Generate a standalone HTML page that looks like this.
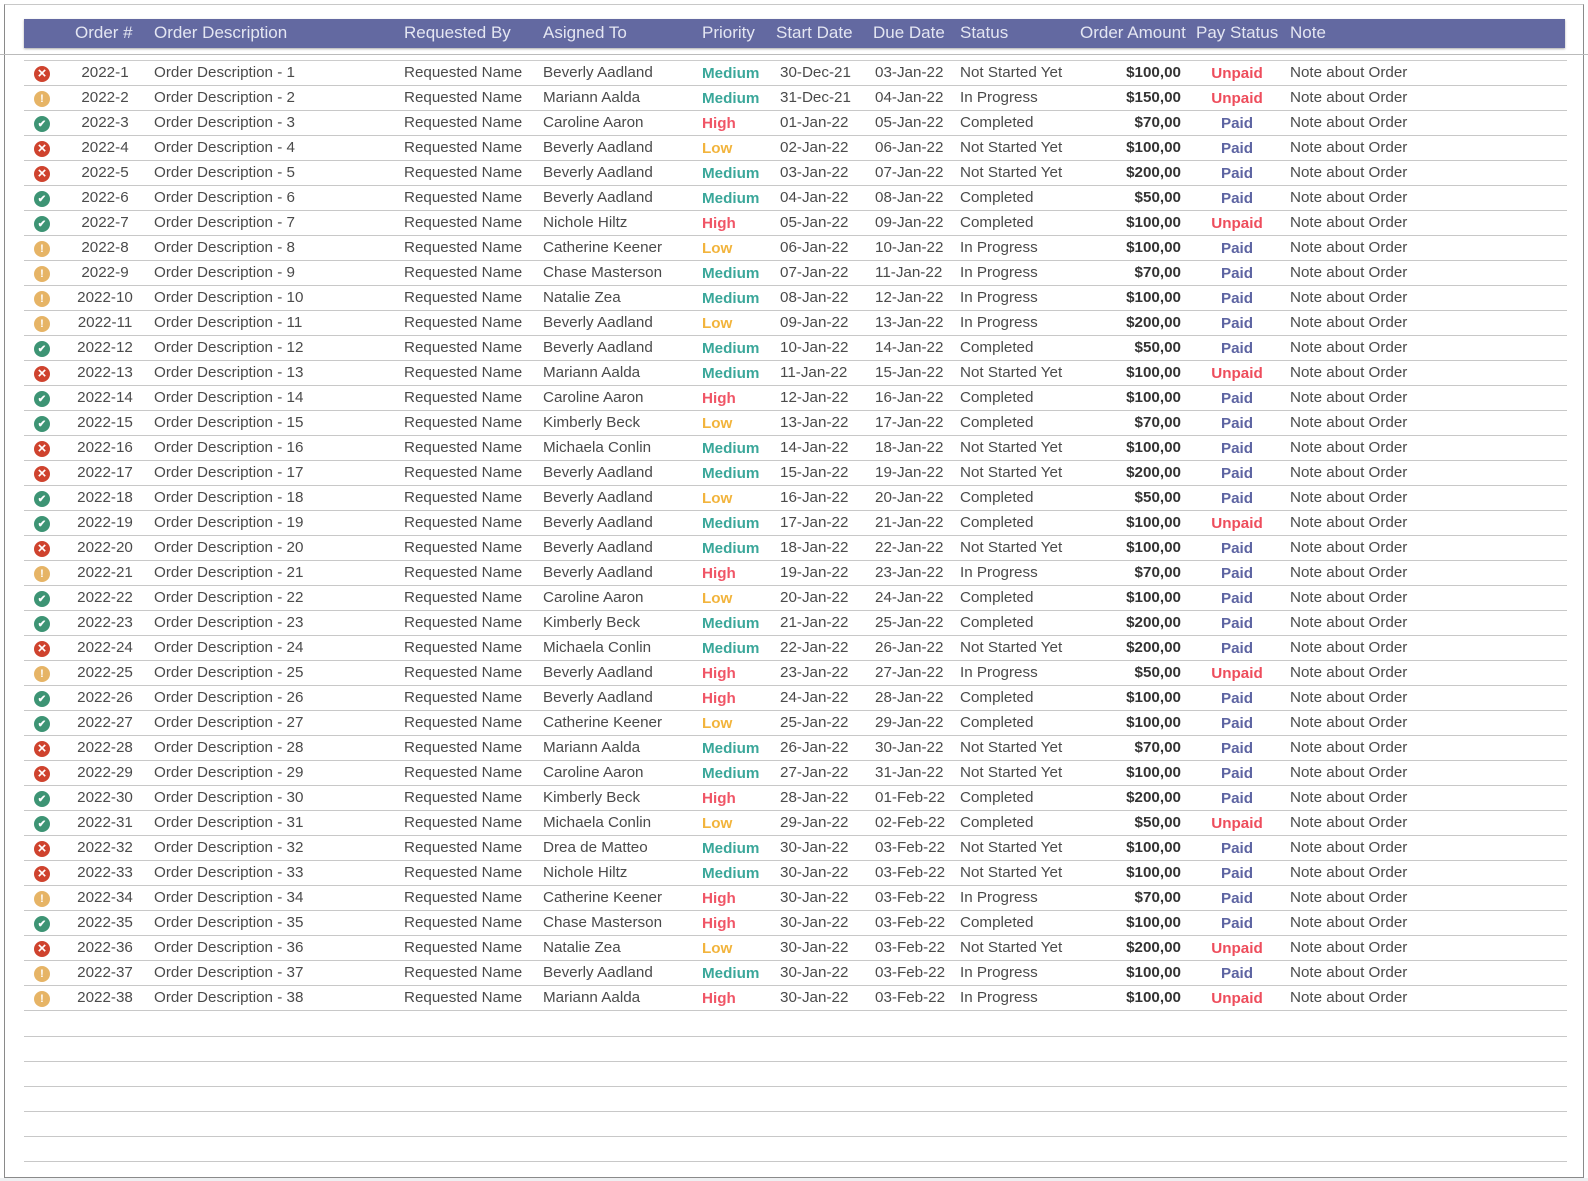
<!DOCTYPE html>
<html><head><meta charset="utf-8"><style>
*{margin:0;padding:0;box-sizing:border-box}
body{width:1588px;height:1181px;background:#fff;font-family:"Liberation Sans",sans-serif;color:#4a4a4a;position:relative;overflow:hidden}
.frame{position:absolute;left:4px;top:4px;width:1580px;height:1174px;border:1px solid #8a8a8a;border-top-color:#c8c8c8}
.bottom{position:absolute;left:0;top:1178px;width:1588px;height:3px;background:#eef0f2}
.hdr{position:absolute;left:24px;top:19px;width:1541px;height:29px;background:#6369a1;box-shadow:0 1px 2px #aaa}
.hdr span{position:absolute;top:4px;font-size:17px;color:#e4e6f2;white-space:nowrap}
.sep{position:absolute;left:0;top:54px;width:1588px;height:1px;background:#bbb}
.top2{position:absolute;left:24px;top:60px;width:1543px;height:1px;background:#ccc}
.rows{position:absolute;left:24px;top:61px;width:1543px}
.r{position:relative;height:25px;border-bottom:1px solid #c8c8c8;font-size:15.2px;line-height:23px}
.r span{position:absolute;top:0;white-space:nowrap}
.i{position:absolute;left:10px;top:5px;width:16px;height:16px;border-radius:50%;color:#fff;font-size:11px;line-height:16px;text-align:center;font-weight:bold;font-style:normal}
.x{background:#cf432e}.x:after{content:"×";font-size:15px}
.w{background:#e6b466}.w:after{content:"!"}
.c{background:#3d9474}.c:after{content:"✔";font-size:10px}
.n{left:46px;width:70px;text-align:center}
.d{left:130px}.q{left:380px}.a{left:519px}
.p{left:678px;font-weight:bold;top:1px!important}
.M{color:#3aa79a}.H{color:#f05566}.L{color:#f2b43c}
.s{left:756px}.e{left:851px}.t{left:936px}
.m{left:1057px;width:100px;text-align:right;font-weight:bold;color:#333}
.y{left:1175px;width:76px;text-align:center;font-weight:bold;top:1px!important}
.P{color:#5d64a2}.U{color:#ee4d5c}
.o{left:1266px}
.ln{position:absolute;left:24px;width:1543px;height:1px;background:#c8c8c8}
</style></head><body>
<div class="frame"></div><div class="bottom"></div>
<div class="hdr">
<span style="left:51px">Order #</span><span style="left:130px">Order Description</span><span style="left:380px">Requested By</span><span style="left:519px">Asigned To</span><span style="left:678px">Priority</span><span style="left:752px">Start Date</span><span style="left:849px">Due Date</span><span style="left:936px">Status</span><span style="left:1056px">Order Amount</span><span style="left:1172px">Pay Status</span><span style="left:1266px">Note</span>
</div>
<div class="sep"></div><div class="top2"></div>
<div class="rows">
<div class="r"><i class="i x"></i><span class="n">2022-1</span><span class="d">Order Description - 1</span><span class="q">Requested Name</span><span class="a">Beverly Aadland</span><span class="p M">Medium</span><span class="s">30-Dec-21</span><span class="e">03-Jan-22</span><span class="t">Not Started Yet</span><span class="m">$100,00</span><span class="y U">Unpaid</span><span class="o">Note about Order</span></div>
<div class="r"><i class="i w"></i><span class="n">2022-2</span><span class="d">Order Description - 2</span><span class="q">Requested Name</span><span class="a">Mariann Aalda</span><span class="p M">Medium</span><span class="s">31-Dec-21</span><span class="e">04-Jan-22</span><span class="t">In Progress</span><span class="m">$150,00</span><span class="y U">Unpaid</span><span class="o">Note about Order</span></div>
<div class="r"><i class="i c"></i><span class="n">2022-3</span><span class="d">Order Description - 3</span><span class="q">Requested Name</span><span class="a">Caroline Aaron</span><span class="p H">High</span><span class="s">01-Jan-22</span><span class="e">05-Jan-22</span><span class="t">Completed</span><span class="m">$70,00</span><span class="y P">Paid</span><span class="o">Note about Order</span></div>
<div class="r"><i class="i x"></i><span class="n">2022-4</span><span class="d">Order Description - 4</span><span class="q">Requested Name</span><span class="a">Beverly Aadland</span><span class="p L">Low</span><span class="s">02-Jan-22</span><span class="e">06-Jan-22</span><span class="t">Not Started Yet</span><span class="m">$100,00</span><span class="y P">Paid</span><span class="o">Note about Order</span></div>
<div class="r"><i class="i x"></i><span class="n">2022-5</span><span class="d">Order Description - 5</span><span class="q">Requested Name</span><span class="a">Beverly Aadland</span><span class="p M">Medium</span><span class="s">03-Jan-22</span><span class="e">07-Jan-22</span><span class="t">Not Started Yet</span><span class="m">$200,00</span><span class="y P">Paid</span><span class="o">Note about Order</span></div>
<div class="r"><i class="i c"></i><span class="n">2022-6</span><span class="d">Order Description - 6</span><span class="q">Requested Name</span><span class="a">Beverly Aadland</span><span class="p M">Medium</span><span class="s">04-Jan-22</span><span class="e">08-Jan-22</span><span class="t">Completed</span><span class="m">$50,00</span><span class="y P">Paid</span><span class="o">Note about Order</span></div>
<div class="r"><i class="i c"></i><span class="n">2022-7</span><span class="d">Order Description - 7</span><span class="q">Requested Name</span><span class="a">Nichole Hiltz</span><span class="p H">High</span><span class="s">05-Jan-22</span><span class="e">09-Jan-22</span><span class="t">Completed</span><span class="m">$100,00</span><span class="y U">Unpaid</span><span class="o">Note about Order</span></div>
<div class="r"><i class="i w"></i><span class="n">2022-8</span><span class="d">Order Description - 8</span><span class="q">Requested Name</span><span class="a">Catherine Keener</span><span class="p L">Low</span><span class="s">06-Jan-22</span><span class="e">10-Jan-22</span><span class="t">In Progress</span><span class="m">$100,00</span><span class="y P">Paid</span><span class="o">Note about Order</span></div>
<div class="r"><i class="i w"></i><span class="n">2022-9</span><span class="d">Order Description - 9</span><span class="q">Requested Name</span><span class="a">Chase Masterson</span><span class="p M">Medium</span><span class="s">07-Jan-22</span><span class="e">11-Jan-22</span><span class="t">In Progress</span><span class="m">$70,00</span><span class="y P">Paid</span><span class="o">Note about Order</span></div>
<div class="r"><i class="i w"></i><span class="n">2022-10</span><span class="d">Order Description - 10</span><span class="q">Requested Name</span><span class="a">Natalie Zea</span><span class="p M">Medium</span><span class="s">08-Jan-22</span><span class="e">12-Jan-22</span><span class="t">In Progress</span><span class="m">$100,00</span><span class="y P">Paid</span><span class="o">Note about Order</span></div>
<div class="r"><i class="i w"></i><span class="n">2022-11</span><span class="d">Order Description - 11</span><span class="q">Requested Name</span><span class="a">Beverly Aadland</span><span class="p L">Low</span><span class="s">09-Jan-22</span><span class="e">13-Jan-22</span><span class="t">In Progress</span><span class="m">$200,00</span><span class="y P">Paid</span><span class="o">Note about Order</span></div>
<div class="r"><i class="i c"></i><span class="n">2022-12</span><span class="d">Order Description - 12</span><span class="q">Requested Name</span><span class="a">Beverly Aadland</span><span class="p M">Medium</span><span class="s">10-Jan-22</span><span class="e">14-Jan-22</span><span class="t">Completed</span><span class="m">$50,00</span><span class="y P">Paid</span><span class="o">Note about Order</span></div>
<div class="r"><i class="i x"></i><span class="n">2022-13</span><span class="d">Order Description - 13</span><span class="q">Requested Name</span><span class="a">Mariann Aalda</span><span class="p M">Medium</span><span class="s">11-Jan-22</span><span class="e">15-Jan-22</span><span class="t">Not Started Yet</span><span class="m">$100,00</span><span class="y U">Unpaid</span><span class="o">Note about Order</span></div>
<div class="r"><i class="i c"></i><span class="n">2022-14</span><span class="d">Order Description - 14</span><span class="q">Requested Name</span><span class="a">Caroline Aaron</span><span class="p H">High</span><span class="s">12-Jan-22</span><span class="e">16-Jan-22</span><span class="t">Completed</span><span class="m">$100,00</span><span class="y P">Paid</span><span class="o">Note about Order</span></div>
<div class="r"><i class="i c"></i><span class="n">2022-15</span><span class="d">Order Description - 15</span><span class="q">Requested Name</span><span class="a">Kimberly Beck</span><span class="p L">Low</span><span class="s">13-Jan-22</span><span class="e">17-Jan-22</span><span class="t">Completed</span><span class="m">$70,00</span><span class="y P">Paid</span><span class="o">Note about Order</span></div>
<div class="r"><i class="i x"></i><span class="n">2022-16</span><span class="d">Order Description - 16</span><span class="q">Requested Name</span><span class="a">Michaela Conlin</span><span class="p M">Medium</span><span class="s">14-Jan-22</span><span class="e">18-Jan-22</span><span class="t">Not Started Yet</span><span class="m">$100,00</span><span class="y P">Paid</span><span class="o">Note about Order</span></div>
<div class="r"><i class="i x"></i><span class="n">2022-17</span><span class="d">Order Description - 17</span><span class="q">Requested Name</span><span class="a">Beverly Aadland</span><span class="p M">Medium</span><span class="s">15-Jan-22</span><span class="e">19-Jan-22</span><span class="t">Not Started Yet</span><span class="m">$200,00</span><span class="y P">Paid</span><span class="o">Note about Order</span></div>
<div class="r"><i class="i c"></i><span class="n">2022-18</span><span class="d">Order Description - 18</span><span class="q">Requested Name</span><span class="a">Beverly Aadland</span><span class="p L">Low</span><span class="s">16-Jan-22</span><span class="e">20-Jan-22</span><span class="t">Completed</span><span class="m">$50,00</span><span class="y P">Paid</span><span class="o">Note about Order</span></div>
<div class="r"><i class="i c"></i><span class="n">2022-19</span><span class="d">Order Description - 19</span><span class="q">Requested Name</span><span class="a">Beverly Aadland</span><span class="p M">Medium</span><span class="s">17-Jan-22</span><span class="e">21-Jan-22</span><span class="t">Completed</span><span class="m">$100,00</span><span class="y U">Unpaid</span><span class="o">Note about Order</span></div>
<div class="r"><i class="i x"></i><span class="n">2022-20</span><span class="d">Order Description - 20</span><span class="q">Requested Name</span><span class="a">Beverly Aadland</span><span class="p M">Medium</span><span class="s">18-Jan-22</span><span class="e">22-Jan-22</span><span class="t">Not Started Yet</span><span class="m">$100,00</span><span class="y P">Paid</span><span class="o">Note about Order</span></div>
<div class="r"><i class="i w"></i><span class="n">2022-21</span><span class="d">Order Description - 21</span><span class="q">Requested Name</span><span class="a">Beverly Aadland</span><span class="p H">High</span><span class="s">19-Jan-22</span><span class="e">23-Jan-22</span><span class="t">In Progress</span><span class="m">$70,00</span><span class="y P">Paid</span><span class="o">Note about Order</span></div>
<div class="r"><i class="i c"></i><span class="n">2022-22</span><span class="d">Order Description - 22</span><span class="q">Requested Name</span><span class="a">Caroline Aaron</span><span class="p L">Low</span><span class="s">20-Jan-22</span><span class="e">24-Jan-22</span><span class="t">Completed</span><span class="m">$100,00</span><span class="y P">Paid</span><span class="o">Note about Order</span></div>
<div class="r"><i class="i c"></i><span class="n">2022-23</span><span class="d">Order Description - 23</span><span class="q">Requested Name</span><span class="a">Kimberly Beck</span><span class="p M">Medium</span><span class="s">21-Jan-22</span><span class="e">25-Jan-22</span><span class="t">Completed</span><span class="m">$200,00</span><span class="y P">Paid</span><span class="o">Note about Order</span></div>
<div class="r"><i class="i x"></i><span class="n">2022-24</span><span class="d">Order Description - 24</span><span class="q">Requested Name</span><span class="a">Michaela Conlin</span><span class="p M">Medium</span><span class="s">22-Jan-22</span><span class="e">26-Jan-22</span><span class="t">Not Started Yet</span><span class="m">$200,00</span><span class="y P">Paid</span><span class="o">Note about Order</span></div>
<div class="r"><i class="i w"></i><span class="n">2022-25</span><span class="d">Order Description - 25</span><span class="q">Requested Name</span><span class="a">Beverly Aadland</span><span class="p H">High</span><span class="s">23-Jan-22</span><span class="e">27-Jan-22</span><span class="t">In Progress</span><span class="m">$50,00</span><span class="y U">Unpaid</span><span class="o">Note about Order</span></div>
<div class="r"><i class="i c"></i><span class="n">2022-26</span><span class="d">Order Description - 26</span><span class="q">Requested Name</span><span class="a">Beverly Aadland</span><span class="p H">High</span><span class="s">24-Jan-22</span><span class="e">28-Jan-22</span><span class="t">Completed</span><span class="m">$100,00</span><span class="y P">Paid</span><span class="o">Note about Order</span></div>
<div class="r"><i class="i c"></i><span class="n">2022-27</span><span class="d">Order Description - 27</span><span class="q">Requested Name</span><span class="a">Catherine Keener</span><span class="p L">Low</span><span class="s">25-Jan-22</span><span class="e">29-Jan-22</span><span class="t">Completed</span><span class="m">$100,00</span><span class="y P">Paid</span><span class="o">Note about Order</span></div>
<div class="r"><i class="i x"></i><span class="n">2022-28</span><span class="d">Order Description - 28</span><span class="q">Requested Name</span><span class="a">Mariann Aalda</span><span class="p M">Medium</span><span class="s">26-Jan-22</span><span class="e">30-Jan-22</span><span class="t">Not Started Yet</span><span class="m">$70,00</span><span class="y P">Paid</span><span class="o">Note about Order</span></div>
<div class="r"><i class="i x"></i><span class="n">2022-29</span><span class="d">Order Description - 29</span><span class="q">Requested Name</span><span class="a">Caroline Aaron</span><span class="p M">Medium</span><span class="s">27-Jan-22</span><span class="e">31-Jan-22</span><span class="t">Not Started Yet</span><span class="m">$100,00</span><span class="y P">Paid</span><span class="o">Note about Order</span></div>
<div class="r"><i class="i c"></i><span class="n">2022-30</span><span class="d">Order Description - 30</span><span class="q">Requested Name</span><span class="a">Kimberly Beck</span><span class="p H">High</span><span class="s">28-Jan-22</span><span class="e">01-Feb-22</span><span class="t">Completed</span><span class="m">$200,00</span><span class="y P">Paid</span><span class="o">Note about Order</span></div>
<div class="r"><i class="i c"></i><span class="n">2022-31</span><span class="d">Order Description - 31</span><span class="q">Requested Name</span><span class="a">Michaela Conlin</span><span class="p L">Low</span><span class="s">29-Jan-22</span><span class="e">02-Feb-22</span><span class="t">Completed</span><span class="m">$50,00</span><span class="y U">Unpaid</span><span class="o">Note about Order</span></div>
<div class="r"><i class="i x"></i><span class="n">2022-32</span><span class="d">Order Description - 32</span><span class="q">Requested Name</span><span class="a">Drea de Matteo</span><span class="p M">Medium</span><span class="s">30-Jan-22</span><span class="e">03-Feb-22</span><span class="t">Not Started Yet</span><span class="m">$100,00</span><span class="y P">Paid</span><span class="o">Note about Order</span></div>
<div class="r"><i class="i x"></i><span class="n">2022-33</span><span class="d">Order Description - 33</span><span class="q">Requested Name</span><span class="a">Nichole Hiltz</span><span class="p M">Medium</span><span class="s">30-Jan-22</span><span class="e">03-Feb-22</span><span class="t">Not Started Yet</span><span class="m">$100,00</span><span class="y P">Paid</span><span class="o">Note about Order</span></div>
<div class="r"><i class="i w"></i><span class="n">2022-34</span><span class="d">Order Description - 34</span><span class="q">Requested Name</span><span class="a">Catherine Keener</span><span class="p H">High</span><span class="s">30-Jan-22</span><span class="e">03-Feb-22</span><span class="t">In Progress</span><span class="m">$70,00</span><span class="y P">Paid</span><span class="o">Note about Order</span></div>
<div class="r"><i class="i c"></i><span class="n">2022-35</span><span class="d">Order Description - 35</span><span class="q">Requested Name</span><span class="a">Chase Masterson</span><span class="p H">High</span><span class="s">30-Jan-22</span><span class="e">03-Feb-22</span><span class="t">Completed</span><span class="m">$100,00</span><span class="y P">Paid</span><span class="o">Note about Order</span></div>
<div class="r"><i class="i x"></i><span class="n">2022-36</span><span class="d">Order Description - 36</span><span class="q">Requested Name</span><span class="a">Natalie Zea</span><span class="p L">Low</span><span class="s">30-Jan-22</span><span class="e">03-Feb-22</span><span class="t">Not Started Yet</span><span class="m">$200,00</span><span class="y U">Unpaid</span><span class="o">Note about Order</span></div>
<div class="r"><i class="i w"></i><span class="n">2022-37</span><span class="d">Order Description - 37</span><span class="q">Requested Name</span><span class="a">Beverly Aadland</span><span class="p M">Medium</span><span class="s">30-Jan-22</span><span class="e">03-Feb-22</span><span class="t">In Progress</span><span class="m">$100,00</span><span class="y P">Paid</span><span class="o">Note about Order</span></div>
<div class="r"><i class="i w"></i><span class="n">2022-38</span><span class="d">Order Description - 38</span><span class="q">Requested Name</span><span class="a">Mariann Aalda</span><span class="p H">High</span><span class="s">30-Jan-22</span><span class="e">03-Feb-22</span><span class="t">In Progress</span><span class="m">$100,00</span><span class="y U">Unpaid</span><span class="o">Note about Order</span></div>
</div>
<div class="ln" style="top:1036px"></div>
<div class="ln" style="top:1061px"></div>
<div class="ln" style="top:1086px"></div>
<div class="ln" style="top:1111px"></div>
<div class="ln" style="top:1136px"></div>
<div class="ln" style="top:1161px"></div>
</body></html>
